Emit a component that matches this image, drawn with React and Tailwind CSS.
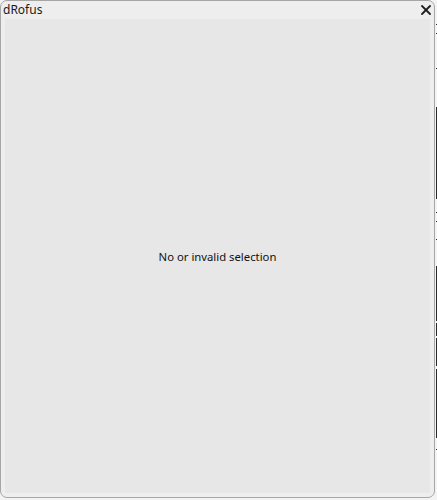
import { X } from 'lucide-react';

// background window peeking out at the right edge: [height, dark?]
const edgeSegments = [
    [24, false], [1, true], [8, false], [1, true], [34, false], [1, true],
    [38, false], [93, true], [13, false], [1, true], [8, false], [1, true],
    [17, false], [1, true], [26, false], [55, true], [2, false], [13, true],
    [2, false], [28, true], [3, false], [70, true], [11, false], [1, true], [50, false],
];

function App() {
    return (
        <div className="w-[437px] h-[500px] bg-[#f3f3f3] flex" style={{ fontFamily: '"Noto Sans", "Open Sans", sans-serif' }}>
            <div className="w-[435px] h-[498px] border border-[#a6a6a6] rounded-[7px] bg-[#eeeeee] flex flex-col overflow-hidden">
                {/* Title bar */}
                <div className="h-[18px] flex items-center justify-between pl-[2px] pr-0">
                    <span className="text-[12px] leading-none text-[#1b1b1b]">dRofus</span>
                    <X className="w-[16px] h-[16px] text-[#1f1f1f]" strokeWidth={2.75} />
                </div>

                {/* Content */}
                <div className="flex-1 mx-[4px] mb-[4px] bg-[#e6e7e6] flex items-center justify-center">
                    <span className="text-[11.3px] text-[#111111] mt-[2px]">No or invalid selection</span>
                </div>
            </div>

            <div className="flex-1 flex justify-end">
                <div className="w-px flex flex-col">
                    {edgeSegments.map(([h, dark], i) => (
                        <div key={i} className={dark ? 'bg-[#2b2b2b]' : 'bg-transparent'} style={{ height: h }} />
                    ))}
                </div>
            </div>
        </div>
    );
}

export default App;
